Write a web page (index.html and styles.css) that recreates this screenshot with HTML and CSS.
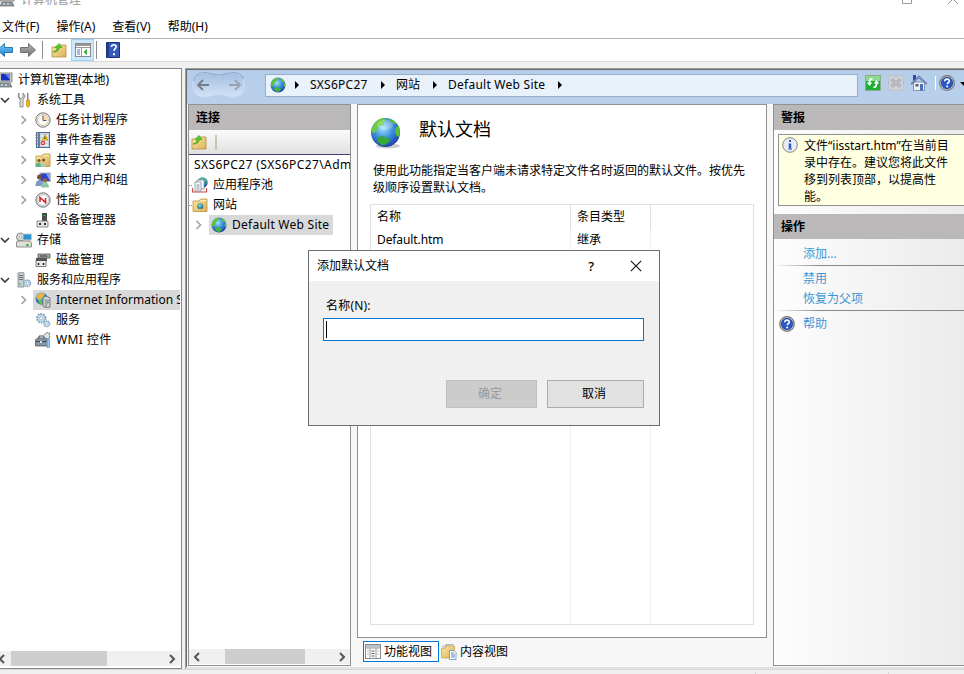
FILE: index.html
```html
<!DOCTYPE html>
<html lang="zh-CN">
<head>
    <meta charset="UTF-8">
    <title>计算机管理</title>
    <link rel="stylesheet" href="styles.css">
</head>
<body>
    <svg class="sprite" width="0" height="0">
        <defs>
            <radialGradient id="sea" cx="42%" cy="35%" r="70%">
                <stop offset="0" stop-color="#a0e6fb"/><stop offset=".5" stop-color="#3b8cda"/><stop offset="1" stop-color="#1a38a0"/>
            </radialGradient>
            <linearGradient id="folderFill" x1="0" y1="0" x2="1" y2="1">
                <stop offset="0" stop-color="#fbeaa6"/><stop offset="1" stop-color="#dcb057"/>
            </linearGradient>
            <linearGradient id="blueFill" x1="0" y1="0" x2="0" y2="1">
                <stop offset="0" stop-color="#7ccbf6"/><stop offset="1" stop-color="#1583d3"/>
            </linearGradient>
            <linearGradient id="grayFill" x1="0" y1="0" x2="0" y2="1">
                <stop offset="0" stop-color="#b5b5b5"/><stop offset="1" stop-color="#737373"/>
            </linearGradient>
            <linearGradient id="pillFill" x1="0" y1="0" x2="0" y2="1">
                <stop offset="0" stop-color="#a3bfe0"/><stop offset=".5" stop-color="#b9d0ec"/><stop offset="1" stop-color="#d2e2f5"/>
            </linearGradient>
        </defs>
        <symbol id="globe" viewBox="0 0 32 32">
            <ellipse cx="18" cy="29" rx="12" ry="2.5" fill="#999" opacity=".5"/>
            <circle cx="15.500" cy="15.500" r="14.500" fill="url(#sea)"/>
            <path d="M1.500 15C2 7 7 2 13 1l3 2-2 2 0 3-5 1-2 4-3 3z" fill="#6ccb3f"/>
            <path d="M18 1.500l5 1.500 4 4-3 0-4-3zM26 10l3-1 1 6-1 5-3-2-1-4z" fill="#5bbd3b"/>
            <path d="M7 21l5-2 8 3-1 3-4 3-4 0-3-3z" fill="#37a83a"/>
            <ellipse cx="15" cy="8" rx="8" ry="5" fill="#fff" opacity=".25"/>
        </symbol>
        <symbol id="globe-small" viewBox="0 0 16 16">
            <circle cx="8" cy="8" r="7.500" fill="url(#sea)"/>
            <path d="M1 9C.5 5 3 1.500 7 .8l1 1.200-1.500 2L5 5 4 8 2 9.500zM10 1l3 1.500 2 3-2 0-2-2zM14 6l1.400 1-.4 3-1.500-1z" fill="#62c23e"/>
            <path d="M4 11l3-1 4 1.500-1 2.500-2.500 1L5 14z" fill="#41b53f"/>
        </symbol>
        <symbol id="computer" viewBox="0 0 16 16">
            <rect x="1" y="1" width="14" height="9" fill="#c9c9c4" stroke="#777" stroke-width=".8"/>
            <rect x="4" y="2" width="9" height="6.500" fill="#1a2fc0"/>
            <path d="M8 2h5v6z" fill="#5a84ec"/>
            <path d="M3 11h10l2 4H1z" fill="#8d9aa0" stroke="#5e686d" stroke-width=".7"/>
            <path d="M4 13h2m2 0h2" stroke="#eee"/>
        </symbol>
        <symbol id="tools" viewBox="0 0 16 16">
            <path d="M3 1v4l2 2 2-2V1l2 3-2 4v7H4V8L2 4z" fill="#dedede" stroke="#777" stroke-width=".8"/>
            <path d="M11 1l1.500 0v7H11z" fill="#888"/>
            <path d="M10.500 8h3v6l-1.500 1.500-1.500-1.500z" fill="#f4b51c" stroke="#b57b0b" stroke-width=".6"/>
        </symbol>
        <symbol id="clock" viewBox="0 0 16 16">
            <circle cx="8" cy="8" r="7.200" fill="#e9e9e9" stroke="#777"/>
            <circle cx="8" cy="8" r="5.400" fill="#fffaf0" stroke="#c9b79a" stroke-width=".7"/>
            <path d="M8 2.800a5.200 5.200 0 0 1 5.200 5.200H8z" fill="#f6dcae"/>
            <path d="M8 3.500V8.500h3.500" fill="none" stroke="#4b5b7b"/>
        </symbol>
        <symbol id="events" viewBox="0 0 16 16">
            <rect x="1.500" y=".5" width="13" height="15" fill="#c9d5e6" stroke="#566c93"/>
            <path d="M4 1v14" stroke="#4a5f88" stroke-width="1.500"/>
            <path d="M.5 3h3m-3 3h3m-3 3h3m-3 3h3" stroke="#777"/>
            <path d="M6 4h7M6 7h7M6 10h7M6 13h7" stroke="#fff"/>
            <path d="M10 2.500l3 5.500h-6z" fill="#ffd21c" stroke="#b58e07" stroke-width=".6"/>
            <path d="M10 4.500v2.500" stroke="#222"/>
            <circle cx="8" cy="11" r="2.300" fill="#dc3535"/>
            <path d="M7 10l2 2m0-2l-2 2" stroke="#fff" stroke-width=".7"/>
        </symbol>
        <symbol id="folder" viewBox="0 0 16 16">
            <path d="M1 4h6l1.500-2H15v12.500H1z" fill="url(#folderFill)" stroke="#bd9142" stroke-width=".8"/>
            <path d="M9 3.500h5" stroke="#fff3c8"/>
        </symbol>
        <symbol id="folder-up" viewBox="0 0 16 16">
            <path d="M1 5h6l1.500-2H15v12H1z" fill="url(#folderFill)" stroke="#b89047" stroke-width=".8"/>
            <path d="M2 10c3-1 4-2 4-4.500H4L8 1.500l3 4H8.500C8 9 5 10.500 2 10z" fill="#4fcb2a" stroke="#3a9a20" stroke-width=".6"/>
        </symbol>
        <symbol id="shared" viewBox="0 0 16 16">
            <use href="#folder"/>
            <circle cx="4" cy="8.500" r="1.600" fill="#79522f"/><circle cx="8.500" cy="8" r="1.600" fill="#79522f"/>
            <path d="M.5 15c0-6 6-6 6 0z" fill="#58b985"/><path d="M5.500 14.500c0-5 5-5 5 0z" fill="#a9cfc4"/>
        </symbol>
        <symbol id="users" viewBox="0 0 16 16">
            <rect x="5" y="1" width="10.500" height="8.500" fill="#2445cb" stroke="#bbb"/>
            <path d="M11 1.500h4V9z" fill="#81a6f3"/>
            <circle cx="4.500" cy="5" r="2.500" fill="#79532f"/><circle cx="10" cy="8.500" r="2.300" fill="#916a42"/>
            <path d="M.5 14c0-8 8-8 8 0z" fill="#7c99c4"/><path d="M6 15.500c0-7 8-7 8 0z" fill="#8cc5a8"/>
        </symbol>
        <symbol id="perf" viewBox="0 0 16 16">
            <circle cx="8" cy="8" r="7.200" fill="#ddd" stroke="#777"/>
            <circle cx="8" cy="8" r="5.400" fill="#fff" stroke="#aaa" stroke-width=".6"/>
            <path d="M5 10V5.500l5.500 5V6" fill="none" stroke="#d31e1e" stroke-width="1.500"/>
        </symbol>
        <symbol id="device" viewBox="0 0 16 16">
            <path d="M7 1h5v9H7z" fill="#4c4c4c"/><path d="M9 3h1v1H9z" fill="#45e64b"/>
            <path d="M2 9h11v6H2z" fill="#e2e2e2" stroke="#777" stroke-width=".8"/>
            <path d="M4 12h2M9 12h2" stroke="#333" stroke-width="2"/>
        </symbol>
        <symbol id="storage" viewBox="0 0 16 16">
            <circle cx="4.500" cy="5" r="4" fill="#d5dad7" stroke="#848e88"/>
            <circle cx="4.500" cy="5" r="1.200" fill="#fff" stroke="#888" stroke-width=".5"/>
            <rect x="7" y="2" width="8.500" height="6" fill="#2794d0" stroke="#c8c8c8"/>
            <path d="M1 9h13l1.500 2v4H.5v-4z" fill="#e0e0d8" stroke="#777" stroke-width=".8"/>
            <path d="M10 13h3" stroke="#26ad2d" stroke-width="1.500"/>
        </symbol>
        <symbol id="disk" viewBox="0 0 16 16">
            <path d="M3 2h12v4H3z" fill="#aaa" stroke="#555" stroke-width=".8"/><path d="M5 4h7" stroke="#333"/>
            <path d="M1 8h10v6.500H1z" fill="#e8e8e8" stroke="#666" stroke-width=".8"/>
            <path d="M1 6h11v3H1z" fill="#555"/><path d="M3.500 11v2M8.500 11v2" stroke="#222" stroke-width="1.600"/>
            <path d="M12 5h1.500" stroke="#2fbb31"/>
        </symbol>
        <symbol id="gear" viewBox="0 0 16 16">
            <circle cx="8" cy="8" r="5.500" fill="#b9dbee" stroke="#7a9db4" stroke-width="2.500" stroke-dasharray="2 1.450"/>
            <circle cx="8" cy="8" r="4.800" fill="#c7e4f3" stroke="#86a9bd" stroke-width=".7"/>
            <circle cx="8" cy="8" r="2.200" fill="#fff" stroke="#789" stroke-width=".7"/>
        </symbol>
        <symbol id="server" viewBox="0 0 16 16">
            <path d="M2 1l4-1 2 1v14H2z" fill="#c6ccd0" stroke="#7d878d" stroke-width=".8"/>
            <path d="M3 3.500h4M3 5.500h4M3 7.500h4" stroke="#6c777d"/>
            <path d="M3 12h2" stroke="#35b63b"/>
            <use href="#gear" x="6.500" y="6.500" width="9.500" height="9.500"/>
        </symbol>
        <symbol id="services" viewBox="0 0 16 16">
            <use href="#gear" x="0" y="0" width="12.500" height="12.500"/>
            <use href="#gear" x="7.500" y="7.500" width="8.500" height="8.500"/>
        </symbol>
        <symbol id="iis" viewBox="0 0 16 16">
            <circle cx="6.500" cy="6.500" r="6" fill="url(#sea)"/>
            <path d="M1 5c1-3 4-4 6-4l3 1-3 4-3 2z" fill="#efb43a"/><path d="M3 8l4 0 1 4-3 1z" fill="#5fc34a"/>
            <path d="M8 6l3-2 4 2v9l-4 1-3-2z" fill="#d0d4d4" stroke="#666" stroke-width=".8"/>
            <path d="M11 7v8.500M12 9l2-.5M12 11l2-.5" stroke="#777"/>
        </symbol>
        <symbol id="wmi" viewBox="0 0 16 16">
            <path d="M.5 8l2-2h9l2 2v6h-13z" fill="#8395a2" stroke="#4d5b65" stroke-width=".8"/>
            <path d="M1 9.500h12M4 6V4h5v2" stroke="#394853" fill="none"/><path d="M5 9h2v2H5z" fill="#ddd"/>
            <path d="M9 3l3-2.500 3 1-1 2 1 2-2 1" stroke="#888" fill="#e4e4e4"/><path d="M12 7.500h2.500v8H12z" fill="#9ccbed" stroke="#4a7fa6" stroke-width=".6"/>
        </symbol>
        <symbol id="pool" viewBox="0 0 16 16">
            <use href="#globe-small" x="5" y="0" width="11" height="11"/>
            <path d="M5 3h7v9H5z" fill="#fff" stroke="#789" stroke-width=".8"/>
            <path d="M3 5h6v9H3z" fill="#fff" stroke="#789" stroke-width=".8"/>
            <path d="M4.500 8h3M4.500 10h3M4.500 12h3" stroke="#789"/>
            <path d="M.5 11v4h14v-4" fill="none" stroke="#c34d4d" stroke-width="1.200"/>
        </symbol>
        <symbol id="sites" viewBox="0 0 16 16">
            <use href="#folder"/><use href="#globe-small" x="5" y="6" width="6.500" height="6.500"/>
        </symbol>
        <symbol id="help" viewBox="0 0 16 16">
            <circle cx="8" cy="8" r="7.300" fill="#d5d5d5" stroke="#777" stroke-width="1.200"/>
            <circle cx="8" cy="8" r="5.700" fill="#2957c4" stroke="#16368c" stroke-width=".7"/>
            <path d="M5.800 6.300c0-3 4.700-2.800 4.500-.2-.1 1.400-2 1.500-2 3.100" fill="none" stroke="#fff" stroke-width="1.600"/>
            <circle cx="8.200" cy="11.400" r="1" fill="#fff"/>
        </symbol>
        <symbol id="help-book" viewBox="0 0 14 16">
            <path d="M.5.5h13v15H.5z" fill="#3659bc" stroke="#1c3278"/><path d="M1 1h2v14H1z" fill="#223d8c"/>
            <path d="M5.500 5c0-3 5-3 4.700 0-.2 1.800-2.200 1.700-2.200 4" fill="none" stroke="#fff" stroke-width="1.600"/>
            <path d="M7 11.200h2v2H7z" fill="#fff"/>
        </symbol>
        <symbol id="info" viewBox="0 0 16 16">
            <circle cx="8" cy="8" r="7.300" fill="#e9ebf2" stroke="#888"/>
            <path d="M7 3h2v2H7zM6.500 6.500h2.700V11.500h-2.400V7.500z" fill="#2855c8"/><path d="M6.300 12h3.700" stroke="#2855c8"/>
        </symbol>
        <symbol id="refresh" viewBox="0 0 16 16">
            <rect x=".5" y=".5" width="15" height="15" fill="#1fae35" stroke="#8bab8b"/>
            <path d="M1 1h14v5H1z" fill="#8ad98d"/>
            <path d="M7.500 4C5 3.500 4.500 5 4.500 8M8.500 12c2.500.5 3-1 3-4" fill="none" stroke="#fff" stroke-width="1.800"/>
            <path d="M1.800 7.500h5.400L4.500 11zM8.800 8.500h5.400L11.500 5z" fill="#fff"/>
        </symbol>
        <symbol id="stop" viewBox="0 0 16 16">
            <rect x=".5" y=".5" width="15" height="15" fill="#ccd0d4" stroke="#bcc3ca"/>
            <path d="M3.500 4.500l9 7m0-7l-9 7" stroke="#9b9fa5" stroke-width="2.400"/><path d="M3.500 4.500l9 7m0-7l-9 7" stroke="#e6e8ea" stroke-width=".8"/>
        </symbol>
        <symbol id="home" viewBox="0 0 16 16">
            <path d="M2.500 7h11v8.500h-11z" fill="#eef0f5" stroke="#7180a0" stroke-width=".8"/>
            <path d="M2 0h3v4L2 6z" fill="#2f43bc"/>
            <path d="M0 8.500L8 .8l8 7.700-1 .7L8 3 1 9.200z" fill="#8fa3cf" stroke="#364d8e" stroke-width=".6"/>
            <path d="M9 9h3v6.500H9z" fill="#4970b5"/><path d="M4.500 9h3v2.500h-3z" fill="#525e78"/>
        </symbol>
        <symbol id="features" viewBox="0 0 16 16">
            <rect x=".5" y=".5" width="15" height="14" fill="#fff" stroke="#8b8b8b"/>
            <path d="M1 1h14v2.500H1z" fill="#bcc4d0"/><path d="M1 4h14M5 4v10M11 4v10" stroke="#999"/>
            <path d="M6.500 7h3m-3 2.500h3m-3 2.500h3" stroke="#555"/><path d="M2 7h2m-2 3h2m8-3h2m-2 3h2" stroke="#abc"/>
        </symbol>
        <symbol id="content-view" viewBox="0 0 16 16">
            <path d="M2 2h7v10H2zM5 .5h7V11H5z" fill="#eee" stroke="#999" stroke-width=".7"/>
            <path d="M.5 5l4-1 1-2h8v12h-13z" fill="url(#folderFill)" stroke="#bd9142" stroke-width=".6"/>
            <path d="M8.500 6.500h4.500l2 2v7H8.500z" fill="#fff" stroke="#668ab8" stroke-width=".8"/>
            <path d="M10 9h3m-3 2h4m-4 2h4" stroke="#4d83c9"/>
        </symbol>
        <symbol id="window" viewBox="0 0 16 14">
            <rect x=".5" y=".5" width="15" height="13" fill="#fff" stroke="#8a8a8a"/>
            <path d="M1 1h14v2H1z" fill="#999"/><path d="M1 4.500h14M6.500 5v9" stroke="#999"/>
            <path d="M2 7h3M2 9h3M2 11h3" stroke="#4d79b5"/><path d="M12 6v6L8.500 9z" fill="#37a936"/>
        </symbol>
        <symbol id="arrow-right" viewBox="0 0 16 14">
            <path d="M.5 4.500h8v-4L15.500 7l-7 6.500v-4h-8z" stroke-width=".9"/>
        </symbol>
        <symbol id="open" viewBox="0 0 10 10"><path d="M1 3l4 4 4-4" fill="none" stroke="#404040" stroke-width="1.700"/></symbol>
        <symbol id="closed" viewBox="0 0 10 10"><path d="M2.500 1l4 4-4 4" fill="none" stroke="#a3a3a3" stroke-width="1.700"/></symbol>
        <symbol id="scroll-left" viewBox="0 0 10 10"><path d="M7 1L3 5l4 4" fill="none" stroke="#555" stroke-width="2"/></symbol>
        <symbol id="scroll-right" viewBox="0 0 10 10"><path d="M3 1l4 4-4 4" fill="none" stroke="#555" stroke-width="2"/></symbol>
    </svg>

    <div class="titlebar">
        <svg class="icon"><use href="#computer"/></svg>
        <span class="title">计算机管理</span>
        <svg class="win-buttons" width="56" height="10" viewBox="0 0 56 10">
            <path d="M.5-5.500h9v9h-9zM46-6l10 10m0-10L46 4" fill="none" stroke="#999"/>
        </svg>
    </div>
    <div class="menubar">
        <span>文件(F)</span><span>操作(A)</span><span>查看(V)</span><span>帮助(H)</span>
    </div>
    <div class="toolbar">
        <svg class="tool-back" width="16" height="14"><use href="#arrow-right"/></svg>
        <svg class="tool-forward" width="16" height="14"><use href="#arrow-right"/></svg>
        <i class="tool-sep"></i>
        <svg class="icon tool-up"><use href="#folder-up"/></svg>
        <div class="tool-active"><svg width="16" height="14"><use href="#window"/></svg></div>
        <i class="tool-sep"></i>
        <svg class="tool-help" width="14" height="16"><use href="#help-book"/></svg>
    </div>

    <div class="workspace">
        <div class="console">
            <ul class="tree">
                <li class="root"><svg class="icon"><use href="#computer"/></svg><span>计算机管理(本地)</span></li>
                <li><svg class="twisty"><use href="#open"/></svg><svg class="icon"><use href="#tools"/></svg><span>系统工具</span></li>
                <li class="sub"><svg class="twisty"><use href="#closed"/></svg><svg class="icon"><use href="#clock"/></svg><span>任务计划程序</span></li>
                <li class="sub"><svg class="twisty"><use href="#closed"/></svg><svg class="icon"><use href="#events"/></svg><span>事件查看器</span></li>
                <li class="sub"><svg class="twisty"><use href="#closed"/></svg><svg class="icon"><use href="#shared"/></svg><span>共享文件夹</span></li>
                <li class="sub"><svg class="twisty"><use href="#closed"/></svg><svg class="icon"><use href="#users"/></svg><span>本地用户和组</span></li>
                <li class="sub"><svg class="twisty"><use href="#closed"/></svg><svg class="icon"><use href="#perf"/></svg><span>性能</span></li>
                <li class="sub"><svg class="twisty"></svg><svg class="icon"><use href="#device"/></svg><span>设备管理器</span></li>
                <li><svg class="twisty"><use href="#open"/></svg><svg class="icon"><use href="#storage"/></svg><span>存储</span></li>
                <li class="sub"><svg class="twisty"></svg><svg class="icon"><use href="#disk"/></svg><span>磁盘管理</span></li>
                <li><svg class="twisty"><use href="#open"/></svg><svg class="icon"><use href="#server"/></svg><span>服务和应用程序</span></li>
                <li class="sub"><svg class="twisty"><use href="#closed"/></svg><div class="selected"><svg class="icon"><use href="#iis"/></svg><span>Internet Information Services</span></div></li>
                <li class="sub"><svg class="twisty"></svg><svg class="icon"><use href="#services"/></svg><span>服务</span></li>
                <li class="sub"><svg class="twisty"></svg><svg class="icon"><use href="#wmi"/></svg><span class="latin wide">WMI 控件</span></li>
            </ul>
            <div class="scrollbar"><svg><use href="#scroll-left"/></svg><i class="thumb"></i><svg class="end"><use href="#scroll-right"/></svg></div>
        </div>

        <div class="iis">
            <div class="navbar">
                <svg class="nav-pill" width="56" height="28" viewBox="0 0 56 28">
                    <path d="M13 1.500C20 1.500 22 4 28 4s8-2.500 15-2.500c14 0 14 24.500 0 24.500-7 0-9-3-15-3s-8 3-15 3C-2 26-2 1.500 13 1.500z" fill="url(#pillFill)" stroke="#cbdcf1" stroke-width="1.300"/>
                    <path d="M2.500 10C4 4 8 1.500 13 1.500 20 1.500 22 4 28 4s8-2.500 15-2.500c5 0 8 2.500 9.500 6.500" fill="none" stroke="#8fa9cc" stroke-width="1.200"/>
                    <path d="M18 14H7m5-5l-5 5 5 5" fill="none" stroke="#777d88" stroke-width="1.800"/>
                    <path d="M38 14h11m-5-5l5 5-5 5" fill="none" stroke="#98a2b2" stroke-width="1.800"/>
                </svg>
                <div class="address">
                    <svg class="icon"><use href="#globe-small"/></svg>
                    <i class="crumb"></i><span class="latin host">SXS6PC27</span>
                    <i class="crumb"></i><span class="site-group">网站</span>
                    <i class="crumb"></i><span class="latin site">Default Web Site</span>
                    <i class="crumb"></i>
                </div>
                <div class="nav-tools">
                    <svg class="icon"><use href="#refresh"/></svg>
                    <svg class="icon"><use href="#stop"/></svg>
                    <svg class="icon"><use href="#home"/></svg>
                    <i></i>
                    <svg class="icon"><use href="#help"/></svg>
                    <b></b>
                </div>
            </div>

            <div class="panels">
                <div class="connections">
                    <h2>连接</h2>
                    <div class="conn-tools"><svg class="icon"><use href="#folder-up"/></svg><i></i></div>
                    <ul class="conn-tree">
                        <li class="machine latin wide">SXS6PC27 (SXS6PC27\Administrator)</li>
                        <li class="node"><svg class="icon"><use href="#pool"/></svg><span>应用程序池</span></li>
                        <li class="node"><svg class="icon"><use href="#sites"/></svg><span>网站</span></li>
                        <li class="leaf"><svg class="twisty"><use href="#closed"/></svg><div class="selected"><svg class="icon"><use href="#globe-small"/></svg><span class="latin">Default Web Site</span></div></li>
                    </ul>
                    <div class="scrollbar"><svg><use href="#scroll-left"/></svg><i class="thumb"></i><svg class="end"><use href="#scroll-right"/></svg></div>
                </div>

                <div class="center">
                    <div class="feature">
                        <div class="feature-head"><svg width="32" height="32"><use href="#globe"/></svg><h1>默认文档</h1></div>
                        <p>使用此功能指定当客户端未请求特定文件名时返回的默认文件。按优先级顺序设置默认文档。</p>
                        <div class="grid">
                            <div class="head"><span>名称</span><span>条目类型</span><span></span></div>
                            <div class="body"><span class="doc">Default.htm</span><span>继承</span><span></span></div>
                        </div>
                    </div>
                    <div class="views">
                        <div class="view active"><svg class="icon"><use href="#features"/></svg><span>功能视图</span></div>
                        <div class="view"><svg class="icon"><use href="#content-view"/></svg><span>内容视图</span></div>
                    </div>
                </div>

                <div class="actions">
                    <h2>警报</h2>
                    <div class="alert"><svg class="icon"><use href="#info"/></svg>
                        <p>文件“iisstart.htm”在当前目<br>录中存在。建议您将此文件<br>移到列表顶部，以提高性<br>能。</p>
                    </div>
                    <h2>操作</h2>
                    <ul class="links">
                        <li class="add">添加...</li>
                        <li class="rule"></li>
                        <li>禁用</li>
                        <li>恢复为父项</li>
                        <li class="rule"></li>
                        <li class="help"><svg class="icon"><use href="#help"/></svg>帮助</li>
                    </ul>
                </div>
            </div>
        </div>
    </div>
    <div class="statusbar"><i></i><i></i></div>

    <div class="dialog">
        <div class="dialog-title">
            <span>添加默认文档</span><span class="question">?</span>
            <svg width="12" height="12" viewBox="0 0 12 12"><path d="M.8.800l10.400 10.400m0-10.400L.8 11.200" stroke="#111" stroke-width="1.100"/></svg>
        </div>
        <div class="dialog-body">
            <label>名称(N):</label>
            <div class="field"><i></i></div>
            <div class="buttons"><button class="ok" disabled>确定</button><button class="cancel">取消</button></div>
        </div>
    </div>
</body>
</html>
```
FILE: styles.css
```css
* {box-sizing: border-box;}
body {margin: 0; width: 964px; height: 674px; overflow: hidden; position: relative; display: flex; flex-direction: column; background: #f0f0f0; color: #000; font: 12px/20px "Noto Sans", "Noto Sans CJK SC", sans-serif;}
ul {list-style: none; margin: 0; padding: 0;}
h1, h2, p {margin: 0;}
svg {display: block; flex: none;}
i {flex: none;}
.sprite {position: absolute;}
.icon {width: 16px; height: 16px;}
.latin {letter-spacing: 0.25px;}
.latin.wide {letter-spacing: 0.4px;}

/* window chrome */
.titlebar {display: flex; height: 14px; background: #fff; overflow: hidden;}
.titlebar .icon {margin: -9px 0 0 -1px;}
.titlebar .title {margin: -10px 0 0 6px; color: #999;}
.win-buttons {margin-left: auto; margin-right: 6px;}
.menubar {display: flex; height: 24px; padding: 3px 0 0 2px; gap: 17px; background: #fff;}
.toolbar {display: flex; align-items: center; height: 24px; background: #fff; border-top: 1px solid #b0b0b0; border-bottom: 1px solid #dadada;}
.tool-back {margin-left: -3px; transform: scaleX(-1); fill: url(#blueFill); stroke: #216ea9;}
.tool-forward {margin-left: 7px; fill: url(#grayFill); stroke: #666;}
.tool-sep {width: 1px; height: 18px; margin-left: 6px; background: #8c8c8c;}
.tool-up {margin: 0 4px 0 8px;}
.tool-active {display: flex; align-items: center; justify-content: center; width: 23px; height: 22px; background: #cce8ff; border: 1px solid #99d1ff;}
.tool-active + .tool-sep {margin-left: 2px;}
.tool-help {margin-left: 9px;}

.workspace {display: flex; height: 601px; margin-top: 6px;}

/* console tree */
.console {display: flex; flex-direction: column; width: 182px; border: 1px solid #828790; border-left: 0; background: #fff; overflow: hidden;}
.tree {flex: 1; padding-top: 1px;}
.tree li {display: flex; align-items: center; height: 20px; white-space: nowrap;}
.tree span {margin-left: 5px;}
.twisty {width: 10px; height: 10px; margin-right: 6px;}
.tree .root .icon {margin-left: -3px;}
.tree .sub {padding-left: 19px;}
.sub .selected {margin-left: -2px; padding-left: 2px; width: 147px;}
.selected {display: flex; align-items: center; height: 20px; background: #d9d9d9; overflow: hidden;}
.scrollbar {display: flex; align-items: center; height: 15px; background: #f0f0f0;}
.scrollbar svg {width: 10px; height: 10px;}
.scrollbar .thumb {height: 15px; background: #cdcdcd;}
.scrollbar .end {margin-left: auto;}
.console .scrollbar {margin: 0 1px 2px 0; padding-right: 3px;}
.console .scrollbar svg:first-child {margin-left: -3px;}
.console .thumb {width: 96px; margin-left: 4px;}

/* iis manager */
.iis {flex: 1; display: flex; flex-direction: column; min-width: 0; margin-left: 3px; border: solid #a0a0a0; border-width: 1px 0 0 1px; background: #f7f7f7; box-shadow: inset 1px 1px #696969;}
.navbar {display: flex; height: 34px; margin: 1px 0 0 1px; background: linear-gradient(#b4cee9, #b9d0eb);}
.nav-pill {margin: 1px 0 0 4px;}
.address {display: flex; flex: none; align-items: center; width: 593px; height: 23px; margin: 4px 0 0 18px; padding: 0 0 1px 4px; border: 1px solid #96aec9; background: #e9f1fb;}
.crumb {width: 0; height: 0; border: 4px solid transparent; border-left-color: #000; border-right: 0;}
.address .icon + .crumb {margin-left: 9px;}
.host {width: 71px; margin-left: 11px;}
.site-group {width: 37px; margin-left: 11px;}
.site {width: 110px; margin-left: 11px;}
.nav-tools {display: flex; margin: 5px 0 0 7px;}
.nav-tools .icon {margin-right: 7px;}
.nav-tools i {width: 1px; height: 14px; margin: 1px 3px 0 1px; background: #fff;}
.nav-tools i + .icon {margin-right: 5px;}
.nav-tools b {flex: none; width: 0; height: 0; margin-top: 7px; border: 4px solid transparent; border-top-color: #000;}
.panels {display: flex; flex: 1; padding-left: 2px; border-bottom: 2px solid #e2e2e2;}
h2 {height: 25px; padding-left: 7px; font-size: 12px; line-height: 25px; font-weight: bold; background: #bbb8ba;}
.connections {display: flex; flex-direction: column; width: 163px; height: 562px; border: 1px solid #919191; background: #fff; overflow: hidden;}
.conn-tools {display: flex; align-items: center; height: 25px; padding-left: 2px; background: linear-gradient(#fbfbfb, #e0e0e0); border-bottom: 1px solid #404070;}
.conn-tools i {width: 2px; height: 15px; margin-left: 8px; background: #c6c6b2;}
.conn-tree {flex: 1;}
.conn-tree li {display: flex; align-items: center; height: 20px; white-space: nowrap;}
.conn-tree .machine {padding-left: 5px;}
.node::before {content: ""; width: 3px; border-top: 1px dotted #888;}
.node span {margin-left: 5px;}
.leaf .twisty {margin: 0 5px 0 5px;}
.leaf .selected {width: 124px; padding-left: 2px;}
.leaf span {margin-left: 5px;}
.connections .scrollbar {margin-bottom: 1px; padding: 0 3px;}
.connections .thumb {width: 80px; margin-left: 23px;}

.center {width: 410px; margin-left: 6px;}
.feature {height: 534px; padding: 12px 12px; border: 1px solid #919191; background: #fff;}
.feature-head {display: flex; height: 45px;}
h1 {margin-left: 17px; font-size: 18px; line-height: 24px; font-weight: normal;}
.feature p {height: 42px; padding-left: 3px; line-height: 17px; white-space: normal;}
.grid {display: flex; flex-direction: column; width: 384px; height: 421px; border: 1px solid #e0e0e0;}
.head, .body {display: grid; grid-template-columns: 200px 80px 1fr;}
.grid span {padding-left: 6px; border-right: 1px solid #e0e0e0; line-height: 24px;}
.grid span:last-child {border-right: 0;}
.head {height: 24px;}
.body {flex: 1;}
.body span {line-height: 22px; border-color: #e8f0fc;}
.grid .doc {letter-spacing: -0.1px;}
.views {display: flex; gap: 2px; padding: 3px 0 0 6px;}
.view {display: flex; align-items: center; height: 21px; gap: 3px;}
.view.active {width: 76px; padding-left: 1px; border: 1px solid #0078d7; background: #fff;}

.actions {flex: 1; height: 562px; margin-left: 6px; border: 1px solid #919191; border-right: 0; background: linear-gradient(90deg, #fdfdfd, #ebebeb);}
.alert {display: flex; height: 72px; margin: 4px 0 8px 4px; padding: 2px 0 0 3px; border: 1px solid #919191; border-right: 0; background: #ffffe1;}
.alert p {margin-left: 6px; line-height: 17px; white-space: nowrap;}
.links {padding-top: 5px; color: #3c96d2;}
.links li {height: 20px; padding-left: 29px;}
.links .rule {height: 1px; margin: 1px 0 3px; background: linear-gradient(90deg, transparent, #888 25%);}
.links .help {display: flex; align-items: center; gap: 8px; padding-left: 5px;}

.statusbar {display: flex; flex: 1; padding-top: 2px; border-top: 1px solid #d7d7d7;}
.statusbar i {width: 1px; background: #d7d7d7; margin-left: 755px;}
.statusbar i + i {margin-left: 132px;}

/* add document dialog, floats over the window */
.dialog {position: absolute; left: 308px; top: 250px; width: 352px; height: 176px; border: 1px solid #6e6e73; background: #f0f0f0;}
.dialog-title {display: flex; align-items: center; height: 30px; padding: 0 0 1px 8px; background: #fff;}
.dialog-title svg {margin-right: 17px;}
.question {margin: 0 36px 0 auto; font-size: 13px; font-weight: 500;}
.dialog-body {padding: 15px 15px 0 14px;}
.dialog-body label {display: block; padding-left: 3px; height: 22px; letter-spacing: 0.2px;}
.field {height: 23px; padding: 2px; border: 1px solid #0078d7; background: #fff;}
.field i {display: block; width: 1px; height: 17px; background: #000;}
.buttons {display: flex; justify-content: flex-end; gap: 10px; margin-top: 39px;}
.buttons button {height: 28px; padding: 0 3px 0 0; border: 1px solid #adadad; background: #e1e1e1; color: #000; font: inherit;}
.buttons .ok {width: 91px; border-color: #bfbfbf; background: #ccc; color: #999;}
.buttons .cancel {width: 97px;}
```
